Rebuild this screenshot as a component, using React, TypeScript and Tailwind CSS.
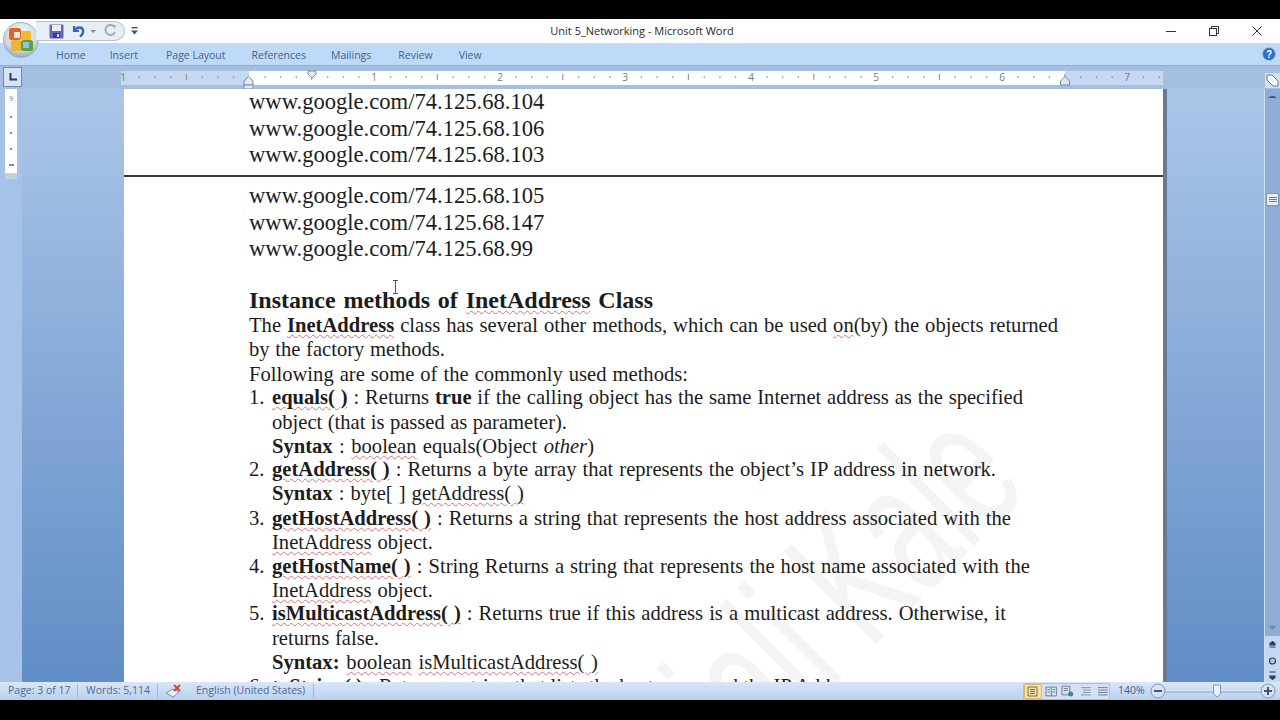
import type { ReactNode } from 'react';

const ticks = Array.from({ length: 67 }, (_, i) => 123 + i * 15.69);
const labels = [
  { x: 123, t: '1' },
  { x: 374, t: '1' },
  { x: 500, t: '2' },
  { x: 625, t: '3' },
  { x: 751, t: '4' },
  { x: 876, t: '5' },
  { x: 1002, t: '6' },
  { x: 1127, t: '7' },
];

function Ruler() {
  return (
    <svg width="1280" height="23" viewBox="0 66 1280 23" className="block">
      <rect x="121" y="71" width="1042" height="14" fill="#c6d8ef" />
      <rect x="249" y="71" width="816" height="14" fill="#ffffff" />
      {ticks.map((x, i) =>
        i % 8 === 0 ? null : i % 4 === 0 ? (
          <rect key={i} x={x} y="74" width="1" height="6" fill="#7d8aa0" />
        ) : (
          <rect key={i} x={x} y="76.5" width="1.4" height="1.4" fill="#7d8aa0" />
        ),
      )}
      {labels.map((l, i) => (
        <text key={i} x={l.x} y="81" textAnchor="middle" fontSize="10" fill="#6c7a90" fontFamily="Open Sans, sans-serif">
          {l.t}
        </text>
      ))}
      <path d="M244 85 L244 81 L248.5 76.5 L253 81 L253 85 Z" fill="#dfe8f4" stroke="#7b8ba3" />
      <rect x="244" y="85" width="9" height="4" fill="#dfe8f4" stroke="#7b8ba3" />
      <path d="M308 71 L316 71 L316 74 L312 78 L308 74 Z" fill="#e4ebf5" stroke="#7b8ba3" />
      <path d="M1060.5 85 L1060.5 81 L1065 76.5 L1069.5 81 L1069.5 85 Z" fill="#dfe8f4" stroke="#7b8ba3" />
    </svg>
  );
}

function OfficeButton() {
  return (
    <svg width="38" height="38" viewBox="0 0 38 38" className="absolute left-[2px] top-[21px]">
      <defs>
        <radialGradient id="orb" cx="50%" cy="30%" r="70%">
          <stop offset="0%" stopColor="#f4f6f8" />
          <stop offset="70%" stopColor="#cfd6de" />
          <stop offset="100%" stopColor="#9aa7b6" />
        </radialGradient>
      </defs>
      <circle cx="19" cy="19" r="17.5" fill="url(#orb)" stroke="#9fb2c6" />
      <rect x="7" y="7" width="12" height="12" rx="2.5" fill="#e2632a" />
      <rect x="19" y="10" width="10" height="9" rx="1.5" fill="#f2b632" />
      <rect x="9" y="19" width="10" height="11" rx="1.5" fill="#e8b73a" />
      <rect x="19" y="19" width="12" height="11" rx="2.5" fill="#5fa13d" />
      <rect x="12" y="11" width="6" height="6" fill="#f6e6d8" />
      <rect x="21" y="21" width="6" height="6" fill="#8cc4e4" />
    </svg>
  );
}

function QuickAccess() {
  return (
    <div className="absolute left-[36px] top-[21px] flex h-[20px] w-[89px] items-center rounded-r-[12px] border border-l-0 border-[#b3c3d8] bg-[#e8eef6] pl-[13px]">
      <svg width="15" height="15" viewBox="0 0 15 15">
        <rect x="0.5" y="0.5" width="14" height="14" rx="1" fill="#6a62b4" />
        <rect x="3" y="1" width="9" height="6" fill="#e9ecf4" />
        <rect x="4" y="9" width="7" height="5" fill="#3c3a80" />
        <rect x="8" y="10" width="2" height="3" fill="#d7dae8" />
      </svg>
      <svg width="16" height="14" viewBox="0 0 16 14" className="ml-[7px]">
        <path d="M3 2 L3 7 L8 7" fill="none" stroke="#3766b8" strokeWidth="2.2" />
        <path d="M3.5 6.5 C6 2.5 11 2.5 12 6 C12.6 8.5 11 11 9 12.5" fill="none" stroke="#3766b8" strokeWidth="2.4" />
      </svg>
      <svg width="7" height="5" viewBox="0 0 7 5" className="ml-[3px]">
        <path d="M0.5 1 H6 L3.2 4 Z" fill="#7d8a9c" />
      </svg>
      <svg width="14" height="14" viewBox="0 0 14 14" className="ml-[6px]">
        <path d="M11.5 3 A5 5 0 1 0 12 8" fill="none" stroke="#a5adb8" strokeWidth="2" />
        <path d="M9 1 L12.5 1 L12.5 5 Z" fill="#a5adb8" />
      </svg>
      <svg width="7" height="9" viewBox="0 0 7 9" className="absolute left-[95px] top-[5px]">
        <rect x="0.5" y="0" width="6" height="1.4" fill="#44546a" />
        <path d="M0 3.5 H7 L3.5 7.5 Z" fill="#44546a" />
      </svg>
    </div>
  );
}

function WindowControls() {
  return (
    <div className="absolute right-[18px] top-0 flex h-[24px] items-center">
      <svg width="10" height="10" viewBox="0 0 10 10" className="mr-[33px]">
        <rect x="0" y="5" width="10" height="1" fill="#333" />
      </svg>
      <svg width="10" height="10" viewBox="0 0 10 10" className="mr-[33px]">
        <rect x="0.5" y="2.5" width="7" height="7" fill="#fff" stroke="#333" />
        <path d="M2.5 2.5 V0.5 H9.5 V7.5 H7.5" fill="none" stroke="#333" />
      </svg>
      <svg width="10" height="10" viewBox="0 0 10 10">
        <path d="M0.5 0.5 L9.5 9.5 M9.5 0.5 L0.5 9.5" stroke="#333" strokeWidth="1" />
      </svg>
    </div>
  );
}

function Help() {
  return (
    <svg width="14" height="14" viewBox="0 0 14 14" className="absolute right-[4px] top-[4px]">
      <circle cx="7" cy="7" r="6.5" fill="#2f6fc0" stroke="#9cc0e8" />
      <text x="7" y="10.5" textAnchor="middle" fontSize="10" fontWeight="bold" fill="#fff" fontFamily="Liberation Sans, sans-serif">
        ?
      </text>
    </svg>
  );
}

function Sq({ children }: { children: ReactNode }) {
  return <span className="underline decoration-wavy decoration-[#d9747c] decoration-1 underline-offset-2">{children}</span>;
}

function Num({ n, children }: { n?: string; children: ReactNode }) {
  return (
    <div className="flex">
      <span className="w-[23px] shrink-0">{n}</span>
      {children}
    </div>
  );
}

const just = 'whitespace-nowrap [text-align-last:justify]';

function PageText() {
  return (
    <div className="relative font-['Liberation_Serif',serif] text-[20.6px] leading-[24px] text-[#1c1c1c]">
      <div className="h-[86px] pl-[125px] pt-[1px] text-[22.6px]">
        <div className="h-[27px]">www.google.com/74.125.68.104</div>
        <div className="h-[26px]">www.google.com/74.125.68.106</div>
        <div className="h-[26px]">www.google.com/74.125.68.103</div>
      </div>
      <div className="h-[2px] bg-[#3a3a3a]" />
      <div className="pl-[125px] pt-[7px] text-[22.6px]">
        <div className="h-[27px]">www.google.com/74.125.68.105</div>
        <div className="h-[26px]">www.google.com/74.125.68.147</div>
        <div className="h-[26px]">www.google.com/74.125.68.99</div>
      </div>
      <div className="pl-[125px] pt-[25px]">
        <div className={`h-[25px] w-[404px] text-[24px] font-bold [word-spacing:-2px] ${just}`}>
          Instance methods of <Sq>InetAddress</Sq> Class
        </div>
        <div className={`h-[24px] w-[809px] ${just}`}>
          The <Sq><b>InetAddress</b></Sq> class has several other methods, which can be used <Sq>on</Sq>(by) the objects returned
        </div>
        <div className={`h-[25px] w-[196px] ${just}`}>by the factory methods.</div>
        <div className={`h-[23px] w-[439px] ${just}`}>Following are some of the commonly used methods:</div>
        <div className="h-[25px]">
          <Num n="1.">
            <div className={`w-[751px] ${just}`}>
              <Sq><b>equals( )</b></Sq> : Returns <b>true</b> if the calling object has the same Internet address as the specified
            </div>
          </Num>
        </div>
        <div className="h-[24px]">
          <Num>
            <div className={`w-[295px] ${just}`}>object (that is passed as parameter).</div>
          </Num>
        </div>
        <div className="h-[23px]">
          <Num>
            <div className={`w-[322px] ${just}`}>
              <b>Syntax</b> : <Sq>boolean</Sq> equals(Object <i>other</i>)
            </div>
          </Num>
        </div>
        <div className="h-[24px]">
          <Num n="2.">
            <div className={`w-[724px] ${just}`}>
              <Sq><b>getAddress( )</b></Sq> : Returns a byte array that represents the object’s IP address in network.
            </div>
          </Num>
        </div>
        <div className="h-[25px]">
          <Num>
            <div className={`w-[252px] ${just}`}>
              <b>Syntax</b> : byte[ ] <Sq>getAddress( )</Sq>
            </div>
          </Num>
        </div>
        <div className="h-[24px]">
          <Num n="3.">
            <div className={`w-[739px] ${just}`}>
              <Sq><b>getHostAddress( )</b></Sq> : Returns a string that represents the host address associated with the
            </div>
          </Num>
        </div>
        <div className="h-[24px]">
          <Num>
            <div className={`w-[161px] ${just}`}>
              <Sq>InetAddress</Sq> object.
            </div>
          </Num>
        </div>
        <div className="h-[24px]">
          <Num n="4.">
            <div className={`w-[758px] ${just}`}>
              <Sq><b>getHostName( )</b></Sq> : String Returns a string that represents the host name associated with the
            </div>
          </Num>
        </div>
        <div className="h-[23px]">
          <Num>
            <div className={`w-[161px] ${just}`}>
              <Sq>InetAddress</Sq> object.
            </div>
          </Num>
        </div>
        <div className="h-[25px]">
          <Num n="5.">
            <div className={`w-[734px] ${just}`}>
              <Sq><b>isMulticastAddress( )</b></Sq> : Returns true if this address is a multicast address. Otherwise, it
            </div>
          </Num>
        </div>
        <div className="h-[24px]">
          <Num>
            <div className={`w-[107px] ${just}`}>returns false.</div>
          </Num>
        </div>
        <div className="h-[24px]">
          <Num>
            <div className={`w-[326px] ${just}`}>
              <b>Syntax:</b> <Sq>boolean</Sq> <Sq>isMulticastAddress( )</Sq>
            </div>
          </Num>
        </div>
        <div className="h-[24px]">
          <Num n="6.">
            <div className={`w-[573px] ${just}`}>
              <Sq><b>toString( )</b></Sq> : Returns a string that lists the host name and the IP Address
            </div>
          </Num>
        </div>
      </div>
    </div>
  );
}

function Scrollbar() {
  return (
    <div className="relative h-full w-[16px] border-l border-[#cfdff3] bg-[#8eacd4]">
      <svg width="15" height="16" viewBox="0 0 15 16" className="absolute left-0 top-0">
        <path d="M3.5 9 C5 6 10 6 11.5 9 Z" fill="#3c5a88" />
      </svg>
      <div className="absolute left-[1px] top-[104px] flex h-[13px] w-[13px] flex-col items-center justify-center gap-[1px] border border-[#8296b4] bg-[#e6edf7]">
        <span className="h-px w-[8px] bg-[#6d7d96]" />
        <span className="h-px w-[8px] bg-[#6d7d96]" />
        <span className="h-px w-[8px] bg-[#6d7d96]" />
      </div>
      <svg width="15" height="60" viewBox="0 0 15 60" className="absolute bottom-0 left-0">
        <rect x="0" y="14" width="15" height="46" fill="#c5d8f1" />
        <path d="M3.5 4 H11.5 L7.5 8 Z" fill="#6f87ab" />
        <path d="M4.5 21 H10.5 M4.5 25 H10.5 M7.5 19 L4.5 23 H10.5 Z" stroke="#2d3f5c" strokeWidth="1" fill="#2d3f5c" />
        <circle cx="7.5" cy="39" r="3" fill="#b9c8dc" stroke="#33415a" strokeWidth="1.2" />
        <path d="M4.5 50 H10.5 M4.5 56 H10.5 M7.5 58 L4.5 54 H10.5 Z" stroke="#2d3f5c" strokeWidth="1" fill="#2d3f5c" />
      </svg>
    </div>
  );
}

function ViewButtons() {
  return (
    <div className="flex h-[17px] w-[87px] items-center rounded-[2px] border border-[#aebfd6] bg-[#d3e1f3]">
      <div className="flex h-full w-[18px] items-center justify-center rounded-[2px] border border-[#e0b85a] bg-[#fbe3a0]">
        <svg width="11" height="11" viewBox="0 0 11 11">
          <path d="M1 1 H10 V10 H1 Z M3 3.5 H8 M3 5.5 H8 M3 7.5 H8" fill="none" stroke="#5e6d84" />
        </svg>
      </div>
      <svg width="13" height="11" viewBox="0 0 13 11" className="ml-[3px]">
        <path d="M1 1 H12 V10 H1 Z M6.5 1 V10 M2.5 3.5 H5 M2.5 6 H5 M8 3.5 H10.5 M8 6 H10.5" fill="none" stroke="#6f7e95" />
      </svg>
      <svg width="13" height="12" viewBox="0 0 13 12" className="ml-[4px]">
        <path d="M1 1 H9 V10 H1 Z M3 3.5 H7 M3 5.5 H7" fill="none" stroke="#6f7e95" />
        <circle cx="10" cy="9" r="2.6" fill="#3a8a8a" />
      </svg>
      <svg width="12" height="11" viewBox="0 0 12 11" className="ml-[6px]">
        <path d="M1 1.5 H11 M3 4 H11 M3 6.5 H11 M1 9 H11" fill="none" stroke="#8794a8" />
      </svg>
      <svg width="12" height="11" viewBox="0 0 12 11" className="ml-[6px]">
        <path d="M1 1.5 H11 M1 4 H11 M1 6.5 H11 M1 9 H11" fill="none" stroke="#6f7e95" />
      </svg>
    </div>
  );
}

function ZoomSlider() {
  return (
    <svg width="126" height="18" viewBox="0 0 126 18" className="ml-[6px] block">
      <rect x="8" y="8.5" width="110" height="1" fill="#e6eef9" />
      <rect x="8" y="9.5" width="110" height="1" fill="#8aa3c6" />
      <circle cx="8" cy="9" r="7" fill="#d5e2f3" stroke="#8096b6" />
      <rect x="4" y="8" width="8" height="2" fill="#43556f" />
      <circle cx="118" cy="9" r="7" fill="#d5e2f3" stroke="#8096b6" />
      <path d="M114 9 H122 M118 5 V13" stroke="#43556f" strokeWidth="2" />
      <path d="M63.5 3 H70.5 V12 L67 15 L63.5 12 Z" fill="#e8eff8" stroke="#8096b6" />
    </svg>
  );
}

export default function App() {
  return (
    <div className="relative flex h-[720px] w-[1280px] flex-col overflow-hidden bg-black font-['Open_Sans',sans-serif]">
      <div className="h-[19px] shrink-0" />
      <div className="relative flex h-[24px] shrink-0 items-center justify-center bg-white pl-[4px] text-[11px] text-[#2a2a2a]">
        <span>Unit 5_Networking - Microsoft Word</span>
        <WindowControls />
      </div>
      <div className="relative flex h-[23px] shrink-0 items-center border-b border-[#93afd4] bg-[#bfdaf9] pl-[56px] pt-[3px] text-[10.5px] text-[#44628c]">
        <span>Home</span>
        <span className="ml-[24px]">Insert</span>
        <span className="ml-[28px]">Page Layout</span>
        <span className="ml-[26px]">References</span>
        <span className="ml-[25px]">Mailings</span>
        <span className="ml-[27px]">Review</span>
        <span className="ml-[26px]">View</span>
        <Help />
      </div>
      <div className="relative h-[23px] shrink-0 bg-[#a5bfe1]">
        <Ruler />
        <div className="absolute left-[3px] top-[1px] flex h-[20px] w-[19px] items-center justify-center border border-[#6d8bb5] bg-[#d5e3f5]">
          <svg width="8" height="8" viewBox="0 0 8 8">
            <path d="M1.5 0 V6.5 H8" fill="none" stroke="#26405f" strokeWidth="2" />
          </svg>
        </div>
        <svg width="15" height="15" viewBox="0 0 15 15" className="absolute left-[1265px] top-[7px]">
          <rect width="15" height="15" fill="#d2e0f2" />
          <path d="M2 2 H7 L13 8 V13 H8 L2 7 Z" fill="#f2f5fa" stroke="#6b7a90" />
        </svg>
      </div>
      <div className="relative flex h-[593px] shrink-0 overflow-hidden bg-gradient-to-b from-[#abc6e8] to-[#618dc6]">
        <div className="w-[22px] shrink-0 bg-[#a6c2e6] pl-[5px]">
          <div className="flex h-[90px] w-[12px] flex-col items-center gap-[14px] border-b-[6px] border-[#c3d0e2] bg-white pt-[6px]">
            <span className="text-[7px] leading-[7px] text-[#6c7a90]">9</span>
            <span className="h-[2px] w-[2px] bg-[#7d8aa0]" />
            <span className="h-[2px] w-[2px] bg-[#7d8aa0]" />
            <span className="h-[2px] w-[2px] bg-[#7d8aa0]" />
            <span className="h-[2px] w-[5px] bg-[#7d8aa0]" />
          </div>
        </div>
        <div className="w-[102px] shrink-0" />
        <div className="relative w-[1039px] shrink-0 overflow-hidden bg-white">
          <div className="absolute left-[526px] top-[620px] origin-[0_161px] [transform:rotate(-45deg)_scaleX(.6)] whitespace-nowrap font-['Liberation_Sans',sans-serif] text-[190px] leading-none text-[#f4f4f4]">
            Anjali Kale
          </div>
          <PageText />
          <svg width="7" height="14" viewBox="0 0 7 14" className="absolute left-[268px] top-[191px]">
            <path d="M1 0.5 H6 M3.5 0.5 V13.5 M1 13.5 H6" stroke="#555" fill="none" />
          </svg>
        </div>
        <div className="w-[4px] shrink-0 bg-[#6a7a94]" />
        <div className="w-[97px] shrink-0" />
        <Scrollbar />
      </div>
      <div className="flex h-[18px] shrink-0 items-center bg-gradient-to-b from-[#d9e7f8] to-[#b9d0ee] text-[10.5px] text-[#4d6a90]">
        <span className="ml-[8px] w-[69px]">Page: 3 of 17</span>
        <span className="h-[14px] w-px bg-[#9fb5d2]" />
        <span className="ml-[8px] w-[71px]">Words: 5,114</span>
        <span className="h-[14px] w-px bg-[#9fb5d2]" />
        <svg width="17" height="14" viewBox="0 0 17 14" className="ml-[7px]">
          <path d="M1 9 L8 5 L14 8 L8 13 Z" fill="#eef2f7" stroke="#7f8ea3" />
          <path d="M9 1 L15 7 M15 1 L9 7" stroke="#d8402f" strokeWidth="1.8" />
        </svg>
        <span className="ml-[14px]">English (United States)</span>
        <span className="ml-[8px] h-[14px] w-px bg-[#9fb5d2]" />
        <div className="ml-auto flex items-center">
          <ViewButtons />
          <span className="ml-[8px] w-[26px] text-[#3f5f8c]">140%</span>
          <ZoomSlider />
          <span className="w-[4px]" />
        </div>
      </div>
      <div className="flex-1" />
      <OfficeButton />
      <QuickAccess />
    </div>
  );
}
